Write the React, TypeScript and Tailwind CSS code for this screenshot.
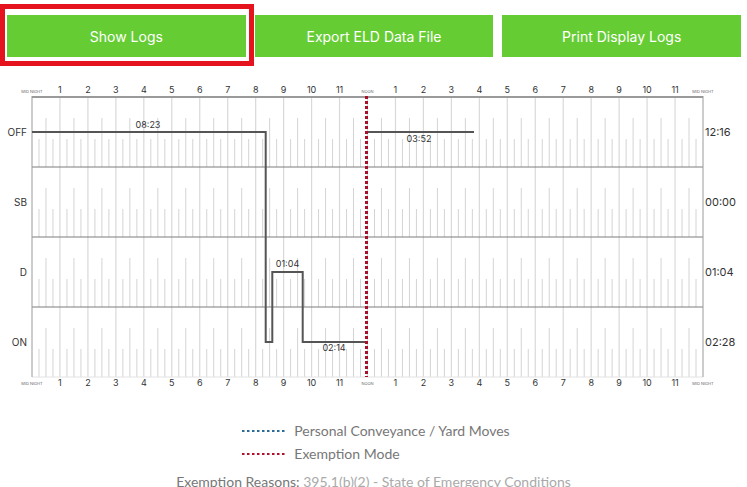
import React from "react";

const X0 = 32;
const X1 = 703;
const HW = (X1 - X0) / 24;
const ROW_TOPS = [97, 167, 237, 307];
const ROW_H = 70;
const BOTTOM = 377;

const statuses = [
  { label: "OFF", total: "12:16" },
  { label: "SB", total: "00:00" },
  { label: "D", total: "01:04" },
  { label: "ON", total: "02:28" },
];

const hourLabels = [
  "MID NIGHT", "1", "2", "3", "4", "5", "6", "7", "8", "9", "10", "11",
  "NOON", "1", "2", "3", "4", "5", "6", "7", "8", "9", "10", "11", "MID NIGHT",
];

function hx(h: number) {
  return X0 + h * HW;
}

function LogGrid() {
  const ticks: React.ReactNode[] = [];

  ROW_TOPS.forEach((top, r) => {
    const bottom = top + ROW_H;
    for (let q = 1; q < 96; q += 1) {
      if (q % 4 === 0) continue;
      const x = X0 + (q * HW) / 4;
      const len = q % 2 === 0 ? 49 : 28;
      ticks.push(
        <line key={`t-${r}-${q}`} x1={x} x2={x} y1={bottom - len} y2={bottom} stroke="#d4d4d4" strokeWidth={1} />
      );
    }
  });

  return (
    <svg width={747} height={312} viewBox="0 80 747 312" className="block" style={{ fontFamily: "Inter, 'Liberation Sans', sans-serif" }}>
      {/* hour lines */}
      {Array.from({ length: 23 }, (_, i) => (
        <line key={`h-${i}`} x1={hx(i + 1)} x2={hx(i + 1)} y1={97} y2={BOTTOM} stroke="#d9d9d9" strokeWidth={1.2} />
      ))}
      {ticks}

      {/* row separators */}
      {[167, 237, 307].map((y) => (
        <line key={`r-${y}`} x1={X0} x2={X1} y1={y} y2={y} stroke="#7c7c7c" strokeWidth={1} />
      ))}
      <line x1={X0} x2={X1} y1={97} y2={97} stroke="#9a9a9a" strokeWidth={2} />
      <line x1={X0} x2={X1} y1={BOTTOM} y2={BOTTOM} stroke="#e2e2e2" strokeWidth={1} />
      <line x1={X0} x2={X0} y1={96} y2={BOTTOM} stroke="#9a9a9a" strokeWidth={1} />
      <line x1={X1} x2={X1} y1={96} y2={BOTTOM} stroke="#9a9a9a" strokeWidth={1} />

      {/* hour labels top and bottom */}
      {hourLabels.map((label, i) => {
        const small = label === "MID NIGHT" || label === "NOON";
        return (
          <g key={`l-${i}`}>
            <text x={hx(i)} y={93} textAnchor="middle" fontSize={small ? 4 : 9} fill={small ? "#666" : "#333"}>
              {label}
            </text>
            <text x={hx(i)} y={small ? 385 : 386} textAnchor="middle" fontSize={small ? 4 : 9} fill={small ? "#666" : "#333"}>
              {label}
            </text>
          </g>
        );
      })}

      {/* status labels */}
      {statuses.map((s, i) => (
        <g key={s.label}>
          <text x={27} y={ROW_TOPS[i] + 39} textAnchor="end" fontSize={10} fill="#333">
            {s.label}
          </text>
          <text x={705} y={ROW_TOPS[i] + 39} fontSize={11} fill="#333">
            {s.total}
          </text>
        </g>
      ))}

      {/* duty status line */}
      <path d="M32 132 H265.7 V342 H272.3 V272 H302.7 V342 H366" fill="none" stroke="#555" strokeWidth={2} />
      <path d="M366 132 H474" fill="none" stroke="#555" strokeWidth={2} />

      <text x={148} y={128} textAnchor="middle" fontSize={9} fill="#333">08:23</text>
      <text x={419} y={142} textAnchor="middle" fontSize={9} fill="#333">03:52</text>
      <text x={287.5} y={267} textAnchor="middle" fontSize={9} fill="#333">01:04</text>
      <text x={334} y={351} textAnchor="middle" fontSize={9} fill="#333">02:14</text>

      {/* exemption line */}
      <line x1={366.5} x2={366.5} y1={96} y2={377} stroke="#a8102a" strokeWidth={3} strokeDasharray="3 2" />
    </svg>
  );
}

export default function App() {
  const buttons = ["Show Logs", "Export ELD Data File", "Print Display Logs"];

  return (
    <div className="relative h-[487px] w-[747px] overflow-hidden bg-white">
      <div className="flex gap-[9px] pl-[7px] pr-[6px] pt-[15px]">
        {buttons.map((b) => (
          <div
            key={b}
            className="flex h-[42px] flex-1 items-center justify-center bg-[#66cc33] text-[14px] text-white"
            style={{ fontFamily: "Inter, 'Liberation Sans', sans-serif" }}
          >
            {b}
          </div>
        ))}
      </div>
      <div className="absolute left-0 top-[4px] h-[62px] w-[254px] border-[5px] border-[#e5131d]" />

      <div className="mt-[23px]">
        <LogGrid />
      </div>

      <div className="mt-[28px] flex flex-col items-center" style={{ fontFamily: "Lato, 'Open Sans', sans-serif" }}>
        <div className="ml-[5px] flex flex-col gap-[2px] text-[14px] text-[#777]">
          <div className="flex items-center gap-[8px]">
            <svg width={44} height={4} className="block">
              <line x1={0} x2={44} y1={2} y2={2} stroke="#2c6a98" strokeWidth={2} strokeDasharray="2.5 2.5" />
            </svg>
            <span>Personal Conveyance / Yard Moves</span>
          </div>
          <div className="flex items-center gap-[8px]">
            <svg width={44} height={4} className="block">
              <line x1={0} x2={44} y1={2} y2={2} stroke="#b0102a" strokeWidth={2} strokeDasharray="2.5 2.5" />
            </svg>
            <span>Exemption Mode</span>
          </div>
        </div>
        <div className="mt-[7px] text-[14px] text-[#777]">
          Exemption Reasons: <span className="text-[#aaa]">395.1(b)(2) - State of Emergency Conditions</span>
        </div>
      </div>
    </div>
  );
}
